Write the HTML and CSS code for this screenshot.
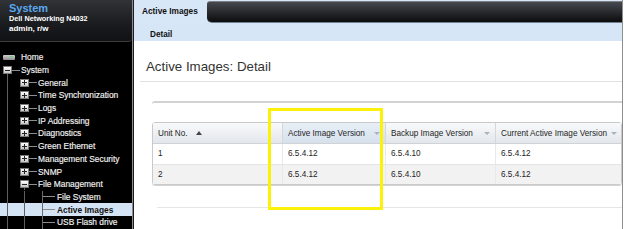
FILE: index.html
```html
<!DOCTYPE html>
<html lang="en">
<head>
    <meta charset="UTF-8">
    <title>Active Images: Detail</title>
    <link rel="stylesheet" href="styles.css">
</head>
<body>
    <aside class="sidebar">
        <div class="sys-head">
            <div class="sys-title">System</div>
            <div class="sys-model">Dell Networking N4032</div>
            <div class="sys-user">admin, r/w</div>
        </div>

        <div class="tree">
            <div class="node l1"><span class="home-ico"></span>Home</div>
            <div class="node l1 sys"><span class="tog"></span><span class="conn"></span>System</div>
            <div class="node l2 trunk"><span class="tog plus"></span><span class="conn"></span>General</div>
            <div class="node l2 trunk"><span class="tog plus"></span><span class="conn"></span>Time Synchronization</div>
            <div class="node l2 trunk"><span class="tog plus"></span><span class="conn"></span>Logs</div>
            <div class="node l2 trunk"><span class="tog plus"></span><span class="conn"></span>IP Addressing</div>
            <div class="node l2 trunk"><span class="tog plus"></span><span class="conn"></span>Diagnostics</div>
            <div class="node l2 trunk"><span class="tog plus"></span><span class="conn"></span>Green Ethernet</div>
            <div class="node l2 trunk"><span class="tog plus"></span><span class="conn"></span>Management Security</div>
            <div class="node l2 trunk"><span class="tog plus"></span><span class="conn"></span>SNMP</div>
            <div class="node l2 fm"><span class="tog"></span><span class="conn"></span>File Management</div>
            <div class="node l3">File System</div>
            <div class="node l3 active">Active Images</div>
            <div class="node l3">USB Flash drive</div>
        </div>
    </aside>

    <main class="main">
        <div class="tabbar">
            <div class="tab">Active Images</div>
            <div class="tabfill"></div>
        </div>
        <div class="subbar"><span class="subtab">Detail</span></div>

        <div class="content">
            <h1 class="page-title">Active Images: Detail</h1>

            <div class="panel">
                <div class="grid">
                    <div class="grid-row grid-head">
                        <div class="cell"><span>Unit No.</span><span class="sort-up"></span></div>
                        <div class="cell hot"><span>Active Image Version</span><span class="sort-dn"></span></div>
                        <div class="cell"><span>Backup Image Version</span><span class="sort-dn"></span></div>
                        <div class="cell"><span>Current Active Image Version</span><span class="sort-dn"></span></div>
                    </div>
                    <div class="grid-row">
                        <div class="cell">1</div>
                        <div class="cell">6.5.4.12</div>
                        <div class="cell">6.5.4.10</div>
                        <div class="cell">6.5.4.12</div>
                    </div>
                    <div class="grid-row alt">
                        <div class="cell">2</div>
                        <div class="cell">6.5.4.12</div>
                        <div class="cell">6.5.4.10</div>
                        <div class="cell">6.5.4.12</div>
                    </div>
                </div>
            </div>
            <div class="panel-foot"></div>
        </div>

        <!-- annotation drawn over the screenshot -->
        <div class="callout"></div>
    </main>
</body>
</html>
```

FILE: styles.css
```css
body {
    margin: 0;
    height: 229px;
    overflow: hidden;
    display: flex;
    background: #fff;
    font-family: "Liberation Sans", Arial, sans-serif;
}

/* left navigation */
.sidebar {
    flex: none;
    width: 132px;
    background: #000;
    border-right: 1px solid #8b8b8b;
}
.sys-head {
    height: 39px;
    padding: 2px 0 0 9px;
    background: linear-gradient(#303337, #1a1b1e 60%, #111214);
    border-bottom: 1px solid #3c3c3c;
    border-bottom-right-radius: 4px;
    color: #fff;
}
.sys-title {
    font-size: 11px;
    font-weight: bold;
    line-height: 12px;
    color: #5aa8ee;
}
.sys-model {
    font-size: 7.3px;
    font-weight: bold;
    line-height: 10px;
}
.sys-user {
    font-size: 8px;
    font-weight: bold;
    line-height: 9px;
}

.tree {
    margin-top: 9px;
}
.node {
    height: 12.7px;
    display: flex;
    align-items: center;
    font-size: 8.4px;
    color: #f4f4f4;
    white-space: nowrap;
    -webkit-text-stroke: 0.15px #f4f4f4;
    background-repeat: no-repeat;
}
.l1 { padding-left: 3px; }
.l2 { padding-left: 20px; }
.l3 { padding-left: 57px; }

.home-ico {
    position: relative;
    width: 12px;
    height: 5px;
    margin-right: 6px;
    border-radius: 1px;
    background: linear-gradient(#d0d0d0, #8c8c8c);
}
.home-ico::after {
    content: "";
    position: absolute;
    right: 2px;
    top: 1px;
    width: 3px;
    height: 1px;
    background: #5fd35f;
}

.tog {
    flex: none;
    width: 9px;
    height: 8px;
    box-sizing: border-box;
    border: 1px solid #7a7a7a;
    background:
        linear-gradient(#222, #222) center / 5px 1px no-repeat,
        linear-gradient(#ffffff, #c6c6c6);
}
.tog.plus {
    background:
        linear-gradient(#222, #222) center / 5px 1px no-repeat,
        linear-gradient(#222, #222) center / 1px 5px no-repeat,
        linear-gradient(#ffffff, #c6c6c6);
}
.conn {
    flex: none;
    width: 8px;
    height: 1px;
    margin-right: 1px;
    background: #8d8d8d;
}

/* tree guide lines */
.sys {
    background-image: linear-gradient(#5e5e5e, #5e5e5e);
    background-position: 7px 100%;
    background-size: 1px 40%;
}
.trunk {
    background-image: linear-gradient(#5e5e5e, #5e5e5e);
    background-position: 7px 0;
    background-size: 1px 100%;
}
.fm {
    background-image: linear-gradient(#5e5e5e, #5e5e5e), linear-gradient(#5e5e5e, #5e5e5e);
    background-position: 7px 0, 24px 100%;
    background-size: 1px 100%, 1px 40%;
}
.l3 {
    background-image:
        linear-gradient(#5e5e5e, #5e5e5e),
        linear-gradient(#5e5e5e, #5e5e5e),
        linear-gradient(#6a6a6a, #6a6a6a),
        linear-gradient(#8d8d8d, #8d8d8d);
    background-position: 7px 0, 24px 0, 42px 0, 42px 50%;
    background-size: 1px 100%, 1px 100%, 1px 100%, 13px 1px;
}
.l3.active {
    background-color: #d5e4f4;
    color: #111;
    -webkit-text-stroke: 0;
    font-weight: bold;
}

/* main area */
.main {
    flex: none;
    position: relative;
    width: 488px;
    border-left: 1px solid #1d1d1d;
    border-right: 1px solid #8e8e8e;
}
.tabbar {
    display: flex;
    height: 23px;
    background: #d8e7f7;
}
.tab {
    width: 65px;
    padding-left: 8px;
    font-size: 8.3px;
    font-weight: bold;
    line-height: 23px;
    color: #111;
}
.tabfill {
    flex: 1;
    margin-top: 1px;
    background: linear-gradient(#45484d, #2b2d31 45%, #0c0c0d);
    border-top: 1px solid #7d7f83;
    border-bottom: 1px solid #6f8294;
    border-radius: 3px 0 0 5px;
}
.subbar {
    height: 18px;
    padding-left: 16px;
    background: #d6e6f7;
}
.subtab {
    font-size: 8.2px;
    font-weight: bold;
    line-height: 18px;
    color: #111;
}

.content {
    padding-left: 6px;
}
.page-title {
    margin: 0;
    padding: 17.5px 0 6.5px 6px;
    font-size: 13.3px;
    font-weight: normal;
    line-height: 16px;
    color: #333;
    border-bottom: 1px solid #e2e2e2;
}
.panel {
    margin: 19px 0 0 12px;
    padding-top: 19px;
    border-top: 2px solid #d2d2d2;
    border-top-left-radius: 3px;
}
.grid {
    width: 470px;
    box-sizing: border-box;
    border: 1px solid #c9c9c9;
    border-radius: 3px;
    box-shadow: 0 1px 0 #d4d4d4;
    font-size: 8.2px;
    color: #222;
}
.grid-row {
    display: grid;
    grid-template-columns: 129px 103px 110px 1fr;
    height: 19.5px;
}
.grid-row.alt {
    background: #f2f2f2;
}
.grid-row + .grid-row {
    border-top: 1px solid #e4e4e4;
}
.grid-head {
    height: 20px;
    background: linear-gradient(#f8f9fb, #e3e7eb);
    border-bottom: 1px solid #cfd3d8;
}
.grid-head + .grid-row {
    border-top: none;
}
.cell {
    display: flex;
    align-items: center;
    padding: 0 3px 0 5px;
    white-space: nowrap;
    overflow: hidden;
}
.cell + .cell {
    border-left: 1px solid #e9e9e9;
}
.grid-head .cell {
    justify-content: space-between;
    color: #1e1e1e;
}
.grid-head .cell + .cell {
    border-left: 1px solid #d4d8dd;
}
.grid-head .cell:first-child {
    justify-content: flex-start;
}
.grid-head .cell.hot {
    background: linear-gradient(#e8eff6, #d6e1ec);
}
.sort-up {
    margin-left: 8px;
    border: 3px solid transparent;
    border-top: 0;
    border-bottom: 4px solid #444;
}
.sort-dn {
    flex: none;
    margin: 0 2px 0 4px;
    border: 3px solid transparent;
    border-bottom: 0;
    border-top: 3px solid #a9b3be;
}
.panel-foot {
    margin: 22px 0 0 17px;
    border-top: 1px solid #e6e6e6;
}

/* yellow annotation rectangle */
.callout {
    position: absolute;
    left: 134px;
    top: 108px;
    width: 115px;
    height: 102px;
    box-sizing: border-box;
    border: 3.5px solid #fbf20a;
}
```
